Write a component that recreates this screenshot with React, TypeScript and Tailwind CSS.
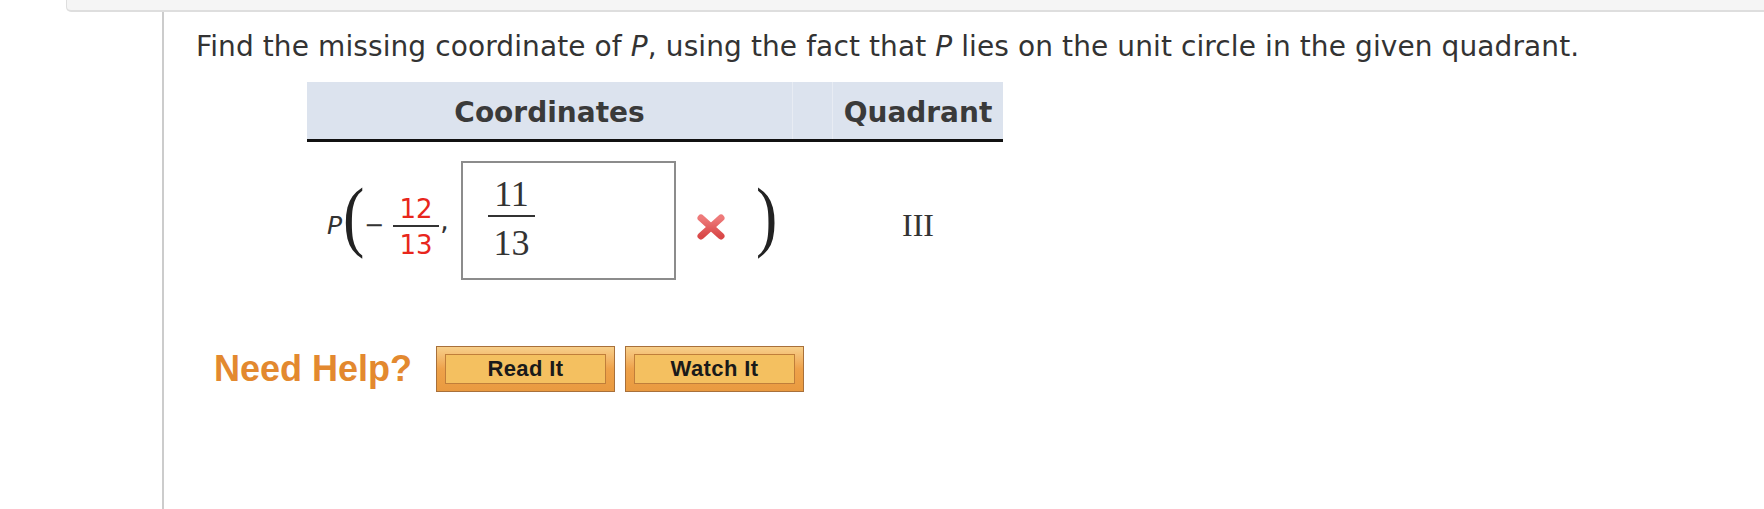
import React from "react";

function RedX() {
  return (
    <svg width="30" height="28" viewBox="0 0 30 28">
      <defs>
        <linearGradient id="xg" x1="0" y1="0" x2="0" y2="1">
          <stop offset="0" stopColor="#ee7a7a" />
          <stop offset="1" stopColor="#d94848" />
        </linearGradient>
      </defs>
      <g stroke="url(#xg)" strokeWidth="7" strokeLinecap="round">
        <line x1="5" y1="5" x2="25" y2="23" />
        <line x1="25" y1="5" x2="5" y2="23" />
      </g>
    </svg>
  );
}

function HelpButton({ label }: { label: string }) {
  return (
    <div className="w-[179px] h-[46px] border border-[#a8703a] bg-gradient-to-b from-[#f7cf8a] via-[#eea24a] to-[#e99a40] pt-[7px] pb-[7px] px-[8px]">
      <div className="w-full h-full border border-[#c07e3a] bg-[#f4c060] flex items-center justify-center">
        <span className="font-['Liberation_Sans',Arial,sans-serif] font-bold text-[22px] leading-none text-[#1a1a1a] tracking-[0.4px]">
          {label}
        </span>
      </div>
    </div>
  );
}

export default function App() {
  const sans = "font-['DejaVu_Sans',Verdana,sans-serif]";
  const serif = "font-['Liberation_Serif','Times_New_Roman',serif]";
  return (
    <div className="w-[1764px] h-[509px] bg-white overflow-hidden flex flex-col">
      <div className="ml-[66px] h-[12px] shrink-0 bg-[#f5f5f5] border-b-2 border-l border-[#dedede] rounded-bl-[5px]" />
      <div className="flex-1 ml-[162px] border-l-2 border-[#cccccc] pl-[32px] flex flex-col">
        <p className={`${sans} text-[28px] leading-[32px] text-[#333333] mt-[19px] tracking-[0.1px]`}>
          Find the missing coordinate of <i>P</i>, using the fact that <i>P</i> lies on the unit circle in the given quadrant.
        </p>

        <div className="ml-[111px] mt-[19px] w-[696px] flex flex-col">
          <div className="flex h-[60px] bg-[#dce3ee] border-b-[3px] border-[#111111]">
            <div className={`w-[485px] flex items-center justify-center pt-[4px] ${sans} font-bold text-[28px] text-[#3a3a3a]`}>
              Coordinates
            </div>
            <div className="w-[41px] border-l border-r border-[#e8ecf3]" />
            <div className={`w-[170px] flex items-center justify-center pt-[4px] ${sans} font-bold text-[28px] text-[#3a3a3a]`}>
              Quadrant
            </div>
          </div>

          <div className="flex pt-[19px] pb-[20px]">
            <div className="w-[485px] flex items-center pl-[20px] text-[#333333]">
              <span className={`w-[17px] mt-[10px] ${sans} italic text-[25px] leading-none`}>P</span>
              <span className={`w-[19px] -mt-[8px] ${serif} text-[64px] leading-none text-[#222222] -ml-[1px] scale-y-[1.21]`}>(</span>
              <span className={`w-[30px] mt-[8px] ${sans} text-[24px] leading-none pl-[2px]`}>−</span>
              <span className="w-[48px] mt-[13px] flex flex-col items-center">
                <span className={`${sans} text-[26px] leading-[26px] text-[#e8261c] pb-[3px]`}>12</span>
                <span className="w-[46px] h-[2px] bg-[#333333]" />
                <span className={`${sans} text-[26px] leading-[26px] text-[#e8261c] pt-[5px]`}>13</span>
              </span>
              <span className={`w-[21px] mt-[0px] ${sans} text-[28px] leading-none`}>,</span>
              <div className="w-[215px] h-[119px] border-2 border-[#8c8c8c] flex items-center pl-[25px]">
                <div className="flex flex-col items-center mb-[4px]">
                  <span className={`${serif} text-[36px] leading-[34px] pb-[4px] px-[5px] text-[#333333]`}>11</span>
                  <span className="w-[47px] h-[2px] bg-[#333333]" />
                  <span className={`${serif} text-[36px] leading-[34px] pt-[9px] px-[5px] text-[#333333]`}>13</span>
                </div>
              </div>
              <span className="ml-[20px] mt-[13px]">
                <RedX />
              </span>
              <span className={`ml-[30px] -mt-[8px] ${serif} text-[64px] leading-none text-[#222222] scale-y-[1.21]`}>)</span>
            </div>
            <div className="w-[41px]" />
            <div className={`w-[170px] flex items-center justify-center mt-[9px] ${serif} text-[32px] text-[#333333]`}>
              III
            </div>
          </div>
        </div>

        <div className="flex items-center mt-[46px] ml-[18px]">
          <span className="font-['Liberation_Sans',Arial,sans-serif] font-bold text-[36px] leading-none text-[#e3892f] w-[222px]">
            Need Help?
          </span>
          <div className="flex gap-[10px]">
            <HelpButton label="Read It" />
            <HelpButton label="Watch It" />
          </div>
        </div>
      </div>
    </div>
  );
}
